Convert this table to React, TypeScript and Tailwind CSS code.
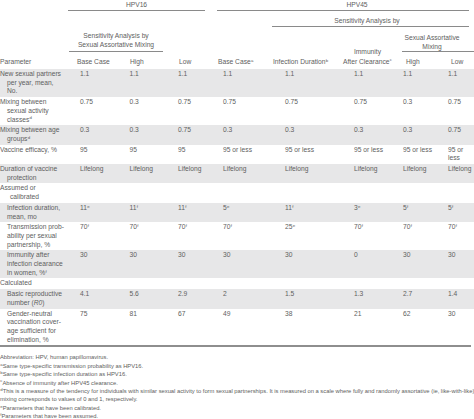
import React from "react";

const cols = "grid grid-cols-[77px_51px_48px_42px_54px_68px_60px_46px_28px]";
const pad = ["", "pl-[3px]", "pl-[1.5px]", "pl-[2px]", "pl-[5px]", "pl-[13px]", "pl-[14px]", "pl-[3px]", "pl-[2px]"];

function Sup({ children }: { children: React.ReactNode }) {
  return <sup className="text-[4.3px] ml-[0.3px]">{children}</sup>;
}

type Row = {
  label: React.ReactNode;
  kind: "top" | "sub" | "group";
  values?: React.ReactNode[];
  gray?: boolean;
};

const rows: Row[] = [
  {
    gray: true,
    kind: "top",
    label: <>New sexual partners<br />per year, mean,<br />No.</>,
    values: ["1.1", "1.1", "1.1", "1.1", "1.1", "1.1", "1.1", "1.1"],
  },
  {
    kind: "top",
    label: <>Mixing between<br />sexual activity<br />classes<Sup>d</Sup></>,
    values: ["0.75", "0.3", "0.75", "0.75", "0.75", "0.75", "0.3", "0.75"],
  },
  {
    gray: true,
    kind: "top",
    label: <>Mixing between age<br />groups<Sup>d</Sup></>,
    values: ["0.3", "0.3", "0.75", "0.3", "0.3", "0.3", "0.3", "0.75"],
  },
  {
    kind: "top",
    label: <>Vaccine efficacy, %</>,
    values: ["95", "95", "95", "95 or less", "95 or less", "95 or less", "95 or less", <>95 or<br />less</>],
  },
  {
    gray: true,
    kind: "top",
    label: <>Duration of vaccine<br />protection</>,
    values: ["Lifelong", "Lifelong", "Lifelong", "Lifelong", "Lifelong", "Lifelong", "Lifelong", "Lifelong"],
  },
  { kind: "group", label: <>Assumed or<br />calibrated</> },
  {
    gray: true,
    kind: "sub",
    label: <>Infection duration,<br />mean, mo</>,
    values: [
      <>11<Sup>e</Sup></>, <>11<Sup>f</Sup></>, <>11<Sup>f</Sup></>,
      <>5<Sup>e</Sup></>, <>11<Sup>f</Sup></>, <>3<Sup>e</Sup></>, <>5<Sup>f</Sup></>, <>5<Sup>f</Sup></>,
    ],
  },
  {
    kind: "sub",
    label: <>Transmission prob-<br />ability per sexual<br />partnership, %</>,
    values: [
      <>70<Sup>f</Sup></>, <>70<Sup>f</Sup></>, <>70<Sup>f</Sup></>,
      <>70<Sup>f</Sup></>, <>25<Sup>e</Sup></>, <>70<Sup>f</Sup></>, <>70<Sup>f</Sup></>, <>70<Sup>f</Sup></>,
    ],
  },
  {
    gray: true,
    kind: "sub",
    label: <>Immunity after<br />infection clearance<br />in women, %<Sup>f</Sup></>,
    values: ["30", "30", "30", "30", "30", "0", "30", "30"],
  },
  { kind: "group", label: <>Calculated</> },
  {
    gray: true,
    kind: "sub",
    label: <>Basic reproductive<br />number (<i>R0</i>)</>,
    values: ["4.1", "5.6", "2.9", "2", "1.5", "1.3", "2.7", "1.4"],
  },
  {
    kind: "sub",
    label: <>Gender-neutral<br />vaccination cover-<br />age sufficient for<br />elimination, %</>,
    values: ["75", "81", "67", "49", "38", "21", "62", "30"],
  },
];

const labelClass = {
  top: "pl-[7px] -indent-[7px]",
  sub: "pl-[7px]",
  group: "pl-[10px] -indent-[10px]",
};

export default function App() {
  return (
    <div className="w-[474px] h-[419px] overflow-hidden bg-white text-[#606060] font-['Liberation_Sans',Arial,sans-serif] text-[6.7px]">
      {/* Header */}
      <div className={`${cols} grid-rows-[11px_16px_25px_17px] leading-[8px] whitespace-nowrap`}>
        <div className="col-start-2 col-span-3 row-start-1 ml-[-9px] mr-[13px] border-b border-[#8a8a8a] text-center pt-[1px]">
          HPV16
        </div>
        <div className="col-start-5 col-span-5 row-start-1 ml-[-1px] mr-[5px] border-b border-[#8a8a8a] text-center pl-[28px] pt-[1px]">
          HPV45
        </div>
        <div className="col-start-6 col-span-4 row-start-2 mr-[5px] border-b border-[#8a8a8a] text-center pr-[7px] pt-[6px]">
          Sensitivity Analysis by
        </div>
        <div className="col-start-2 col-span-2 row-start-2 row-span-2 self-end ml-[-8px] mr-[13px] border-b border-[#8a8a8a] text-center leading-[9px] pb-[2px]">
          Sensitivity Analysis by<br />Sexual Assortative Mixing
        </div>
        <div className="col-start-8 col-span-2 row-start-3 self-end ml-[2px] border-b border-[#8a8a8a] text-center pr-[12px] leading-[9px]">
          Sexual Assortative<br />Mixing
        </div>
        <div className="col-start-7 row-start-3 row-span-2 self-end pl-[3px] pb-[3px] leading-[9.5px]">
          <div className="inline-block text-center">
            Immunity<br />After Clearance<Sup>c</Sup>
          </div>
        </div>
        <div className="col-start-1 row-start-4 self-end pb-[3px]">Parameter</div>
        <div className="col-start-2 row-start-4 self-end pb-[3px]">Base Case</div>
        <div className="col-start-3 row-start-4 self-end pb-[3px] pl-[2px]">High</div>
        <div className="col-start-4 row-start-4 self-end pb-[3px] pl-[3px]">Low</div>
        <div className="col-start-5 row-start-4 self-end pb-[3px]">Base Case<Sup>a</Sup></div>
        <div className="col-start-6 row-start-4 self-end pb-[3px] pl-[1px]">Infection Duration<Sup>b</Sup></div>
        <div className="col-start-8 row-start-4 self-end pb-[3px] pl-[6px]">High</div>
        <div className="col-start-9 row-start-4 self-end pb-[3px] pl-[5px]">Low</div>
      </div>

      {/* Body */}
      <div className="leading-[8.7px]">
        {rows.map((r, i) => (
          <div key={i} className={`${cols} py-[1px] ${r.gray ? "bg-[#e7e7e8]" : ""}`}>
            <div className={`${labelClass[r.kind]} whitespace-nowrap`}>{r.label}</div>
            {r.values &&
              r.values.map((v, j) => (
                <div key={j} className={`${pad[j + 1]} whitespace-nowrap`}>
                  {v}
                </div>
              ))}
          </div>
        ))}
      </div>
      <div className="h-[2px] bg-[#8e8e8e] mr-[3px]" />

      {/* Footnotes */}
      <div className="mt-[6px] text-[5.8px] leading-[8.4px] whitespace-nowrap">
        <p>Abbreviation: HPV, human papillomavirus.</p>
        <p><Sup>a</Sup>Same type-specific transmission probability as HPV16.</p>
        <p><Sup>b</Sup>Same type-specific infection duration as HPV16.</p>
        <p><Sup>c</Sup>Absence of immunity after HPV45 clearance.</p>
        <p>
          <Sup>d</Sup>This is a measure of the tendency for individuals with similar sexual activity to form sexual partnerships. It is measured on a scale where fully and randomly assortative (ie, like-with-like)
          <br />
          mixing corresponds to values of 0 and 1, respectively.
        </p>
        <p><Sup>e</Sup>Parameters that have been calibrated.</p>
        <p><Sup>f</Sup>Parameters that have been assumed.</p>
      </div>
    </div>
  );
}
